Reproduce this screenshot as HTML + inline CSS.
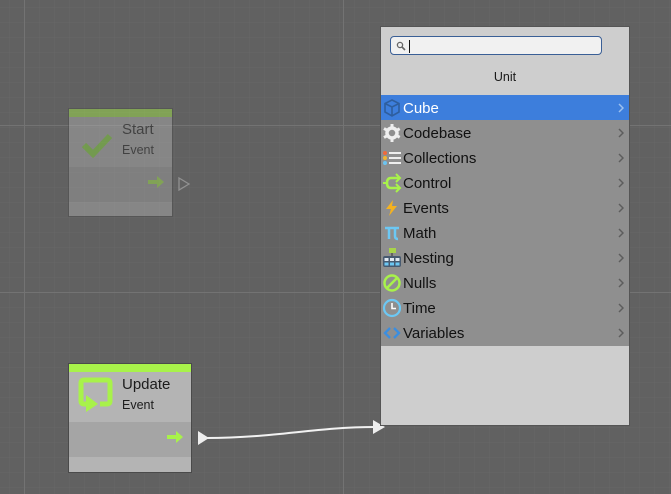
<!DOCTYPE html>
<html><head><meta charset="utf-8"><style>
*{margin:0;padding:0;box-sizing:border-box}
body{width:671px;height:494px;overflow:hidden;background:#616161;font-family:"Liberation Sans","DejaVu Sans",sans-serif;position:relative}
.abs{position:absolute}
svg{display:block}
.node{position:absolute;border:1px solid #4a4a4a;background:#b4b4b4}
.node .hd{position:absolute;left:0;right:0;top:0;height:8px;background:#a8f24a}
.node .ports{position:absolute;left:0;right:0;top:58px;height:35px;background:#a5a5a5}
.node .t1{position:absolute;left:53px;top:12px;font-size:15px;color:#1c1c1c}
.node .t2{position:absolute;left:53px;top:34px;font-size:12.5px;color:#1c1c1c}
.menu{position:absolute;left:380px;top:26px;width:250px;height:400px;background:#cecece;border:1px solid #555}
.item{position:absolute;left:0;width:248px;height:25px;font-size:15px;color:#111;line-height:25px}
.item span{position:absolute;left:22px;top:1px}
.item svg{position:absolute;left:1px;top:3px}
.item svg.ch{left:237px;top:8px}
</style></head><body>
<svg class="abs" style="left:0;top:0" width="671" height="494" xmlns="http://www.w3.org/2000/svg">
<defs>
<pattern id="p" x="9.5" y="7.5" width="15" height="15" patternUnits="userSpaceOnUse"><path d="M0 0H15M0 0V15" stroke="#686868" stroke-width="1" fill="none"/></pattern>
</defs>
<rect width="671" height="494" fill="url(#p)"/>
<path d="M24.5 0V494M343.5 0V494M0 125.5H671M0 292.5H671" stroke="#737373" stroke-width="1"/>
</svg>

<div class="node" style="left:68px;top:108px;width:105px;height:109px;opacity:0.45">
<div class="hd"></div>
<div class="ports"></div>
<svg class="abs" style="left:12px;top:20px" width="32" height="30"><path d="M3 16L12 25L29 7" stroke="#8ae03a" stroke-width="6" fill="none"/></svg>
<div class="t1">Start</div><div class="t2">Event</div>
<svg class="abs" style="left:78px;top:67px" width="18" height="12"><path d="M1 4H10V0L17 6L10 12V8H1Z" fill="#a8f24a"/></svg>
</div>
<svg class="abs" style="left:178px;top:177px;opacity:0.45" width="12" height="14"><path d="M1 1L11 7L1 13Z" fill="none" stroke="#ccc" stroke-width="1.3"/></svg>

<div class="node" style="left:68px;top:363px;width:124px;height:110px">
<div class="hd"></div>
<div class="ports"></div>
<svg class="abs" style="left:8px;top:13px" width="38" height="36"><path d="M12 27H7Q4 27 4 24V6Q4 3 7 3H30Q33 3 33 6V24Q33 27 30 27H23" stroke="#a8f24a" stroke-width="5" fill="none"/><path d="M9 18L21 27L9 35Z" fill="#a8f24a"/></svg>
<div class="t1">Update</div><div class="t2">Event</div>
<svg class="abs" style="left:97px;top:67px" width="18" height="12"><path d="M1 4H10V0L17 6L10 12V8H1Z" fill="#a8f24a"/></svg>
</div>
<svg class="abs" style="left:195px;top:415px" width="195" height="35"><path d="M12 23C80 23 120 12 180 12" stroke="#f2f2f2" stroke-width="2" fill="none"/><path d="M3 16L14 23L3 30Z" fill="#eee"/><path d="M178 5L190 12L178 19Z" fill="#eee"/></svg>

<div class="menu">
<div class="abs" style="left:9px;top:9px;width:212px;height:19px;border:1.5px solid #3a5f96;border-radius:4px;background:#f1f1f1"></div>
<svg class="abs" style="left:15px;top:14px" width="10" height="10"><circle cx="4" cy="4" r="2.6" fill="none" stroke="#666" stroke-width="1.3"/><path d="M6 6L9 9" stroke="#666" stroke-width="1.6"/></svg>
<div class="abs" style="left:28px;top:13px;width:1px;height:13px;background:#111"></div>
<div class="abs" style="left:0;width:248px;top:43px;text-align:center;font-size:12.5px;color:#1a1a1a">Unit</div>
<div class="abs" style="left:0;top:68px;width:248px;height:251px;background:#8f8f8f"></div>
<div class="item" style="top:68px;background:#3d7edc;color:#fff"><svg width="20" height="20"><path d="M10 2L17 5.5V14L10 18L3 14V5.5Z M3 5.5L10 9L17 5.5 M10 9V18" fill="none" stroke="#2e5e9e" stroke-width="1.6"/></svg><span>Cube</span><svg class="ch" width="6" height="10"><path d="M1 1L5 5L1 9" fill="none" stroke="#9cc0ef" stroke-width="1.5"/></svg></div>
<div class="item" style="top:93px"><svg width="20" height="20"><circle cx="10" cy="10" r="5" fill="none" stroke="#eee" stroke-width="3.5"/><path d="M10 1V19M2 5.5L18 14.5M2 14.5L18 5.5" stroke="#eee" stroke-width="3" stroke-dasharray="3 12"/></svg><span>Codebase</span><svg class="ch" width="6" height="10"><path d="M1 1L5 5L1 9" fill="none" stroke="#5d5d5d" stroke-width="1.5"/></svg></div>
<div class="item" style="top:118px"><svg width="20" height="20"><circle cx="3" cy="5" r="2" fill="#f06a3c"/><circle cx="3" cy="10" r="2" fill="#f2b632"/><circle cx="3" cy="15" r="2" fill="#6cc4f0"/><path d="M7 5H19M7 10H19M7 15H19" stroke="#eee" stroke-width="2"/></svg><span>Collections</span><svg class="ch" width="6" height="10"><path d="M1 1L5 5L1 9" fill="none" stroke="#5d5d5d" stroke-width="1.5"/></svg></div>
<div class="item" style="top:143px"><svg width="20" height="20"><path d="M17 5H9Q5 5 5 10Q5 15 9 15H17" fill="none" stroke="#a8f24a" stroke-width="2.5"/><path d="M14 1L18 5L14 9M14 11L18 15L14 19" fill="none" stroke="#a8f24a" stroke-width="2"/><path d="M1 10H5" stroke="#a8f24a" stroke-width="2"/></svg><span>Control</span><svg class="ch" width="6" height="10"><path d="M1 1L5 5L1 9" fill="none" stroke="#5d5d5d" stroke-width="1.5"/></svg></div>
<div class="item" style="top:168px"><svg width="20" height="20"><path d="M11 2L4 11H9L7 18L15 8H10Z" fill="#f5b21f"/></svg><span>Events</span><svg class="ch" width="6" height="10"><path d="M1 1L5 5L1 9" fill="none" stroke="#5d5d5d" stroke-width="1.5"/></svg></div>
<div class="item" style="top:193px"><svg width="20" height="20"><path d="M3 5H17M7 5V16M13 5V13Q13 16 16 16" fill="none" stroke="#6cc8f4" stroke-width="2.5"/></svg><span>Math</span><svg class="ch" width="6" height="10"><path d="M1 1L5 5L1 9" fill="none" stroke="#5d5d5d" stroke-width="1.5"/></svg></div>
<div class="item" style="top:218px"><svg width="20" height="20"><rect x="7" y="0" width="7" height="5" fill="#a8d44a"/><path d="M10 5V8" stroke="#333"/><rect x="1" y="8" width="18" height="11" rx="2" fill="#475a70"/><rect x="2.5" y="10" width="4" height="3" fill="#dfe8f0"/><rect x="8" y="10" width="4" height="3" fill="#dfe8f0"/><rect x="13.5" y="10" width="4" height="3" fill="#dfe8f0"/><rect x="2.5" y="14.5" width="4" height="3" fill="#6cc8f4"/><rect x="8" y="14.5" width="4" height="3" fill="#6cc8f4"/><rect x="13.5" y="14.5" width="4" height="3" fill="#6cc8f4"/></svg><span>Nesting</span><svg class="ch" width="6" height="10"><path d="M1 1L5 5L1 9" fill="none" stroke="#5d5d5d" stroke-width="1.5"/></svg></div>
<div class="item" style="top:243px"><svg width="20" height="20"><circle cx="10" cy="10" r="7.5" fill="none" stroke="#a8f24a" stroke-width="2.5"/><path d="M5 15L15 5" stroke="#a8f24a" stroke-width="2.5"/></svg><span>Nulls</span><svg class="ch" width="6" height="10"><path d="M1 1L5 5L1 9" fill="none" stroke="#5d5d5d" stroke-width="1.5"/></svg></div>
<div class="item" style="top:268px"><svg width="20" height="20"><circle cx="10" cy="10" r="8" fill="none" stroke="#6cc8f4" stroke-width="2.2"/><path d="M10 5V10.5H14" fill="none" stroke="#fff" stroke-width="1.6"/></svg><span>Time</span><svg class="ch" width="6" height="10"><path d="M1 1L5 5L1 9" fill="none" stroke="#5d5d5d" stroke-width="1.5"/></svg></div>
<div class="item" style="top:293px"><svg width="20" height="20"><path d="M8 5L3 10L8 15M12 5L17 10L12 15" fill="none" stroke="#3b8ee0" stroke-width="2.3"/></svg><span>Variables</span><svg class="ch" width="6" height="10"><path d="M1 1L5 5L1 9" fill="none" stroke="#5d5d5d" stroke-width="1.5"/></svg></div>
</div>
</body></html>
